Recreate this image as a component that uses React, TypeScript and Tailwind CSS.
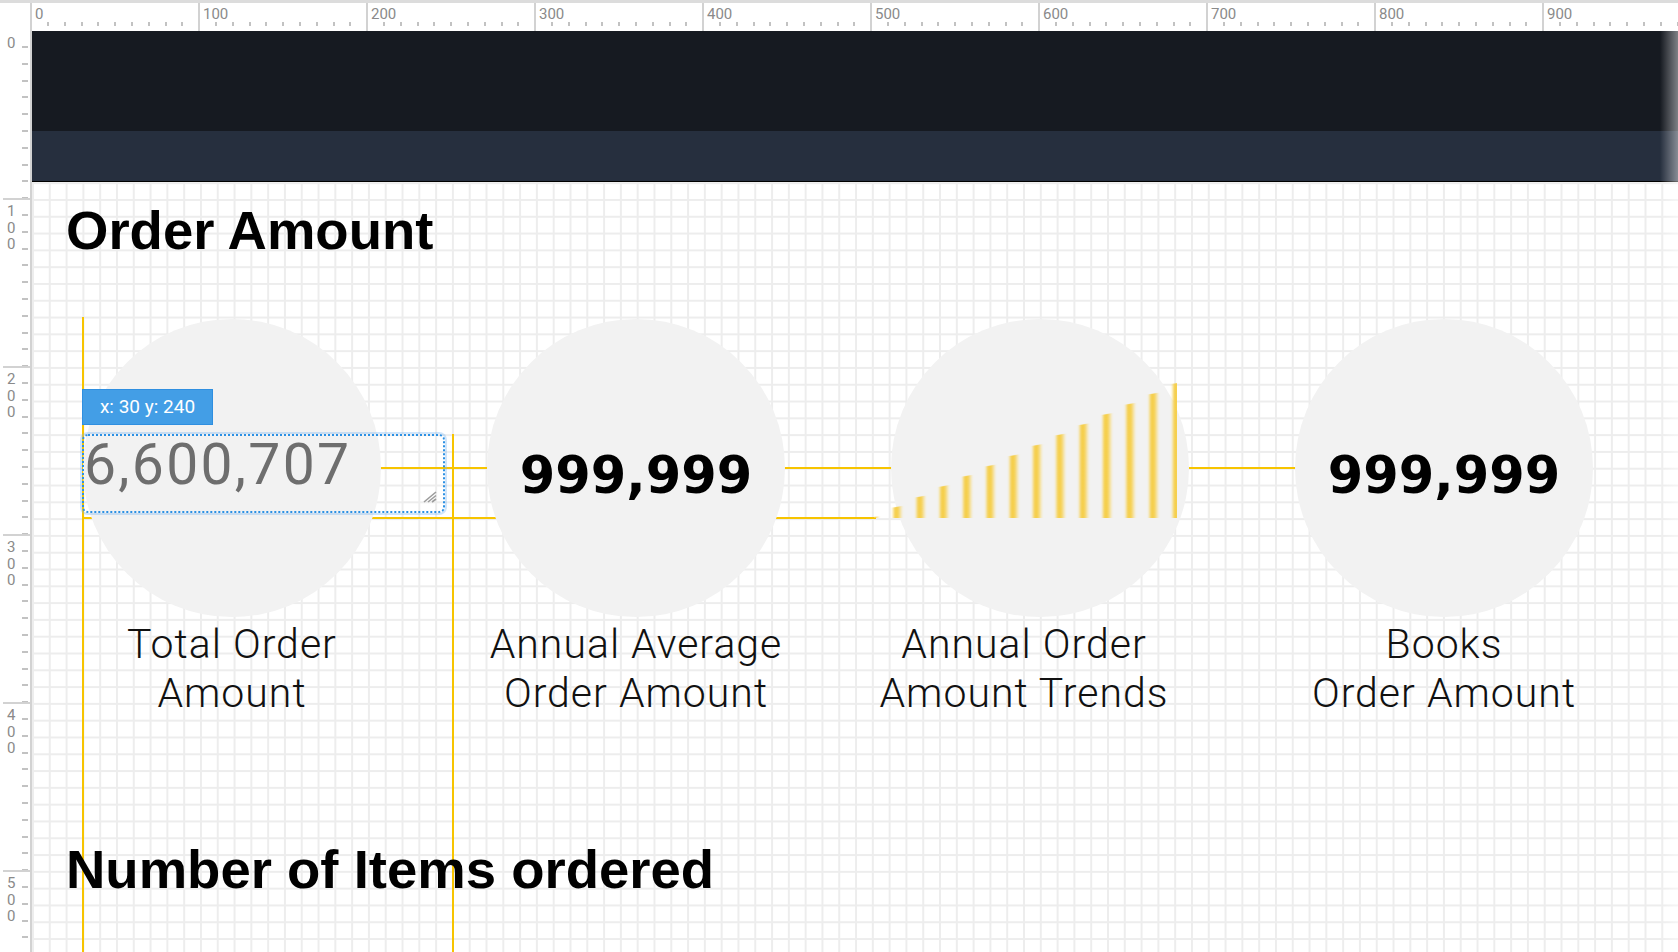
import React from "react";

type AmountCard = {
  kind: "edit" | "number" | "chart";
  value?: string;
  label: [string, string];
  labelClass?: string;
};

const cards: AmountCard[] = [
  { kind: "edit", label: ["Total Order", "Amount"] },
  { kind: "number", value: "999,999", label: ["Annual Average", "Order Amount"] },
  { kind: "chart", label: ["Annual Order", "Amount Trends"], labelClass: "pr-[32px]" },
  { kind: "number", value: "999,999", label: ["Books", "Order Amount"] },
];

const topMarks = [0, 100, 200, 300, 400, 500, 600, 700, 800, 900];
const sideMarks = [0, 100, 200, 300, 400, 500];
const UNIT = 1.68;

const bars = Array.from({ length: 14 }, (_, i) => ({
  x: -5 + 23.3 * i,
  h: 2 + 10.3 * i,
}));

function TrendChart() {
  return (
    <svg
      className="absolute left-[-17px] top-[62px]"
      width="303"
      height="138"
      viewBox="0 0 303 138"
    >
      <defs>
        <linearGradient id="barFill" x1="0" x2="1" y1="0" y2="0">
          <stop offset="0" stopColor="#f7dc7c" stopOpacity="0.35" />
          <stop offset="0.25" stopColor="#f5cd45" />
          <stop offset="0.6" stopColor="#f6d153" />
          <stop offset="1" stopColor="#f8df8c" stopOpacity="0.25" />
        </linearGradient>
        <filter id="soft" x="-20%" y="-5%" width="140%" height="110%">
          <feGaussianBlur stdDeviation="0.8 0.3" />
        </filter>
      </defs>
      <g filter="url(#soft)">
        {bars.map((b, i) => {
          const top = 137 - b.h;
          return (
            <polygon
              key={i}
              fill="url(#barFill)"
              points={`${b.x},137 ${b.x},${top + 2} ${b.x + 10},${top} ${b.x + 10},137`}
            />
          );
        })}
      </g>
    </svg>
  );
}

function TopRuler() {
  return (
    <div className="flex h-[31px] border-t-[3px] border-[#dcdcdc] bg-white">
      <div className="w-[32px] shrink-0 border-r-2 border-[#d2d2d2]" />
      <div className="relative flex-1">
        <div className="absolute left-[15px] right-0 top-[19px] h-[4px] bg-[repeating-linear-gradient(to_right,#c2c2c2_0,#c2c2c2_2px,transparent_2px,transparent_16.8px)]" />
        {topMarks.map((m) => (
          <div
            key={m}
            className="absolute top-0 h-full"
            style={{ left: m * UNIT - 2 }}
          >
            <div className="h-full w-[2px] bg-[#d2d2d2]" />
            <span className="absolute left-[5px] top-[4px] font-['Roboto',sans-serif] text-[15px] leading-none text-[#8a8a8a]">
              {m}
            </span>
          </div>
        ))}
      </div>
    </div>
  );
}

function SideRuler() {
  return (
    <div className="relative w-[32px] shrink-0 border-r-2 border-[#d2d2d2] bg-white">
      <div className="absolute left-[22px] top-[15px] bottom-0 w-[6px] bg-[repeating-linear-gradient(to_bottom,#c2c2c2_0,#c2c2c2_2px,transparent_2px,transparent_16.8px)]" />
      {sideMarks.map((m) => (
        <div key={m} className="absolute left-0 w-full" style={{ top: m * UNIT - 1 }}>
          {m > 0 && <div className="ml-[3px] h-[2px] w-[27px] bg-[#d2d2d2]" />}
          <div className="absolute left-[7px] top-[5px] flex flex-col font-['Roboto',sans-serif] text-[15px] leading-[16.5px] text-[#8a8a8a]">
            {String(m)
              .split("")
              .map((c, i) => (
                <span key={i}>{c}</span>
              ))}
          </div>
        </div>
      ))}
    </div>
  );
}

function Card({ card }: { card: AmountCard }) {
  return (
    <div className="relative flex w-[298px] flex-col items-center">
      <div className="relative flex h-[298px] w-[298px] items-center justify-center rounded-full bg-[#f2f2f2]">
        {card.kind === "number" && (
          <span className="pt-4 font-['DejaVu_Sans',sans-serif] text-[51px] font-bold leading-none text-black">
            {card.value}
          </span>
        )}
        {card.kind === "chart" && <TrendChart />}
      </div>
      <div
        className={`mt-[3px] whitespace-nowrap text-center font-['Roboto',sans-serif] text-[41px] font-light leading-[49px] tracking-[1px] text-[#111] ${card.labelClass ?? ""}`}
      >
        <div>{card.label[0]}</div>
        <div>{card.label[1]}</div>
      </div>
    </div>
  );
}

export default function App() {
  return (
    <div className="relative h-[952px] w-[1678px] overflow-hidden bg-white font-['Liberation_Sans',Arial,sans-serif] text-black">
      <TopRuler />
      <div className="flex h-[921px]">
        <SideRuler />
        <main className="relative flex flex-1 flex-col">
          <header className="shrink-0 border-b border-black">
            <div className="h-[100px] bg-[#161a21]" />
            <div className="h-[50px] bg-[#262f3e]" />
          </header>

          <section className="relative flex-1 bg-white bg-[linear-gradient(to_right,#ededed_2px,transparent_2px),linear-gradient(to_bottom,#ededed_2px,transparent_2px)] bg-[size:16.8px_16.8px] bg-[position:0_0.2px] pl-[34px] pt-[22px]">
            {/* alignment guides */}
            <div className="absolute bottom-0 left-[49.5px] top-[135px] w-[2px] bg-[#f7c400]" />
            <div className="absolute bottom-0 left-[419.5px] top-[252px] w-[2px] bg-[#f7c400]" />
            <div className="absolute left-[200px] top-[285px] h-[2px] w-[1212px] bg-[#f7c400]" />
            <div className="absolute left-[50px] top-[335px] h-[2px] w-[794px] bg-[#f7c400]" />

            <h2 className="relative text-[54.5px] font-bold leading-none">Order Amount</h2>

            <div className="relative mt-[60px] flex gap-[106px] pl-[17px]">
              {cards.map((c) => (
                <Card key={c.label.join(" ")} card={c} />
              ))}
            </div>

            <h2 className="relative mt-[125px] text-[54.5px] font-bold leading-none">
              Number of Items ordered
            </h2>

            {/* selected text box */}
            <div className="absolute left-[50px] top-[207px] flex h-[36px] w-[131px] items-center justify-center border border-[#2f8fe0] bg-[#439ee6] font-['Roboto',sans-serif] text-[19px] text-white">
              x: 30 y: 240
            </div>
            <div className="absolute left-[50px] top-[252px] h-[79px] w-[363px] rounded-[6px] border-2 border-dotted border-[#2b90e4] pt-0 shadow-[0_0_0_2px_rgba(120,180,240,0.35)]">
              <span className="font-['Roboto',sans-serif] text-[57px] leading-none tracking-[2.3px] text-[#6e6e6e]">
                6,600,707
              </span>
              <svg
                className="absolute bottom-[8px] right-[6px]"
                width="14"
                height="12"
                viewBox="0 0 14 12"
              >
                <path
                  d="M13 1 L1 11 M13 4.5 L5 11 M13 8 L9 11"
                  stroke="#9c9c9c"
                  strokeWidth="1.6"
                />
              </svg>
            </div>
          </section>

          <div className="pointer-events-none absolute bottom-0 right-0 top-0 w-[18px] bg-gradient-to-r from-transparent to-white/45" />
        </main>
      </div>
    </div>
  );
}
